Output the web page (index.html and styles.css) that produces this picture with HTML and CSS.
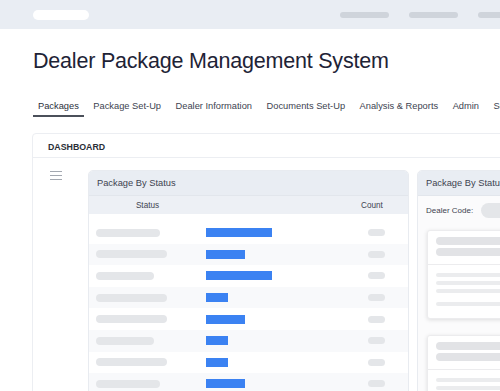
FILE: index.html
```html
<!DOCTYPE html>
<html>
<head>
<meta charset="utf-8">
<link rel="stylesheet" href="styles.css">
</head>
<body>
<div class="topbar">
  <div class="logo"></div>
  <div class="top-links">
    <span class="top-pill"></span>
    <span class="top-pill"></span>
    <span class="top-pill"></span>
  </div>
</div>
<h1 class="title">Dealer Package Management System</h1>
<nav class="tabs">
  <span class="tab active">Packages</span>
  <span class="tab">Package Set-Up</span>
  <span class="tab">Dealer Information</span>
  <span class="tab">Documents Set-Up</span>
  <span class="tab">Analysis &amp; Reports</span>
  <span class="tab">Admin</span>
  <span class="tab">Settings</span>
</nav>
<section class="dash">
  <div class="dash-head">DASHBOARD</div>
  <div class="dash-body">
    <div class="side">
      <svg class="burger" width="12" height="10" viewBox="0 0 12 10"><path d="M0 0.5H12M0 4.5H12M0 8.5H12" stroke="#a3a8b0" stroke-width="1"/></svg>
    </div>
    <div class="panel p1">
      <div class="panel-head">Package By Status</div>
      <div class="cols"><span class="c-status">Status</span><span></span><span class="c-count">Count</span></div>
      <div class="rows">
        <div class="row"><span class="sp" style="width:64px"></span><span class="bar" style="width:66px"></span><span class="cp"></span></div>
        <div class="row"><span class="sp" style="width:71px"></span><span class="bar" style="width:39px"></span><span class="cp"></span></div>
        <div class="row"><span class="sp" style="width:58px"></span><span class="bar" style="width:66px"></span><span class="cp"></span></div>
        <div class="row"><span class="sp" style="width:71px"></span><span class="bar" style="width:22px"></span><span class="cp"></span></div>
        <div class="row"><span class="sp" style="width:71px"></span><span class="bar" style="width:39px"></span><span class="cp"></span></div>
        <div class="row"><span class="sp" style="width:58px"></span><span class="bar" style="width:22px"></span><span class="cp"></span></div>
        <div class="row"><span class="sp" style="width:71px"></span><span class="bar" style="width:22px"></span><span class="cp"></span></div>
        <div class="row"><span class="sp" style="width:64px"></span><span class="bar" style="width:39px"></span><span class="cp"></span></div>
      </div>
    </div>
    <div class="panel p2">
      <div class="panel-head">Package By Status</div>
      <div class="p2-body">
        <div class="dealer"><span class="dlabel">Dealer Code:</span><span class="dinput"></span></div>
        <div class="card">
          <div class="card-top"><span class="pl"></span><span class="pl"></span></div>
          <div class="card-lines"><span class="ln"></span><span class="ln"></span><span class="ln"></span><span class="ln gap"></span></div>
        </div>
        <div class="card">
          <div class="card-top"><span class="pl"></span><span class="pl"></span></div>
          <div class="card-lines"><span class="ln"></span><span class="ln"></span><span class="ln"></span></div>
        </div>
      </div>
    </div>
  </div>
</section>
</body>
</html>
```
FILE: styles.css
```css
html, body {
  margin: 0;
  padding: 0;
}
body {
  width: 500px;
  height: 391px;
  overflow: hidden;
  background: #ffffff;
  font-family: "Liberation Sans", Arial, sans-serif;
  color: #1f2433;
}
.topbar {
  height: 29px;
  background: #e9edf3;
  display: flex;
  align-items: center;
  padding-left: 33px;
}
.logo {
  flex: none;
  width: 56px;
  height: 10px;
  border-radius: 5px;
  background: #ffffff;
}
.top-links {
  display: flex;
  gap: 20px;
  margin-left: 251px;
  flex: none;
}
.top-pill {
  display: block;
  width: 49px;
  height: 6px;
  border-radius: 3px;
  background: #cfd4db;
}
.title {
  margin: 19px 0 0 33px;
  font-size: 21.5px;
  letter-spacing: -0.2px;
  line-height: 26px;
  font-weight: 400;
  color: #1e2336;
  white-space: nowrap;
}
.tabs {
  display: flex;
  gap: 4.5px;
  margin: 26px 0 0 33px;
  white-space: nowrap;
}
.tab {
  font-size: 9.3px;
  line-height: 12px;
  color: #3d4350;
  padding: 0 5px 3px;
  border-bottom: 2px solid transparent;
  flex: none;
}
.tab.active {
  border-bottom-color: #4b505a;
  color: #2b303b;
}
.dash {
  margin: 16px 0 0 32px;
  width: 560px;
  height: 300px;
  border: 1px solid #eceef2;
  border-radius: 4px;
  background: #fff;
}
.dash-head {
  height: 23px;
  border-bottom: 1px solid #eceef2;
  padding-left: 15px;
  font-size: 8.8px;
  font-weight: 700;
  line-height: 26px;
  color: #2a2e37;
}
.dash-body {
  display: flex;
  padding-top: 12px;
}
.side {
  width: 55px;
  flex: none;
}
.burger {
  display: block;
  margin: 1px 0 0 17px;
}
.panel {
  flex: none;
  border: 1px solid #e8ebf0;
  border-radius: 5px 5px 0 0;
  overflow: hidden;
  height: 260px;
}
.p1 {
  width: 319px;
}
.p2 {
  width: 200px;
  margin-left: 8px;
}
.panel-head {
  height: 24px;
  background: #e9edf3;
  padding-left: 8px;
  font-size: 9.3px;
  line-height: 25px;
  color: #3d4350;
}
.cols {
  display: grid;
  grid-template-columns: 117px 137px 65px;
  height: 18px;
  align-items: center;
  background: #edf0f5;
  border-top: 1px solid #e2e6ec;
  font-size: 8.2px;
  color: #3d4350;
}
.c-status {
  justify-self: center;
}
.c-count {
  margin-left: 18px;
}
.rows {
  padding-top: 8px;
}
.row {
  display: grid;
  grid-template-columns: 117px 137px 65px;
  height: 21.6px;
  align-items: center;
}
.row:nth-child(even) {
  background: #f8f9fb;
}
.sp {
  display: block;
  height: 8px;
  border-radius: 4px;
  background: #e4e6e9;
  margin-left: 7px;
}
.bar {
  display: block;
  height: 9px;
  background: #3b82f2;
}
.cp {
  display: block;
  width: 17px;
  height: 7px;
  border-radius: 4px;
  background: #e4e6e9;
  margin-left: 25px;
}
.p2-body {
  background: #fbfbfc;
  height: 240px;
  padding: 0 0 0 9px;
  border-top: 1px solid #e2e6ec;
}
.dealer {
  display: flex;
  align-items: center;
  height: 15px;
  padding-top: 7px;
}
.dlabel {
  font-size: 8px;
  color: #3d4350;
  margin-left: -1px;
  width: 55px;
  flex: none;
}
.dinput {
  display: block;
  width: 120px;
  height: 15px;
  border-radius: 8px;
  background: #e4e6e9;
}
.card {
  margin-top: 12px;
  width: 200px;
  background: #fff;
  border: 1px solid #ececee;
  border-radius: 3px;
  box-shadow: 0 1px 4px rgba(0,0,0,0.12);
}
.card + .card {
  margin-top: 16px;
}
.card-top {
  display: flex;
  flex-direction: column;
  gap: 3px;
  padding: 6px 8px 8px;
  border-bottom: 1px solid #ececee;
}
.pl {
  display: block;
  height: 8px;
  border-radius: 4px;
  background: #e2e3e6;
}
.card-lines {
  display: flex;
  flex-direction: column;
  gap: 4px;
  padding: 8px 8px 12px;
}
.ln {
  display: block;
  height: 4px;
  border-radius: 2px;
  background: #ebecee;
}
.ln.gap {
  margin-top: 5px;
}
```
